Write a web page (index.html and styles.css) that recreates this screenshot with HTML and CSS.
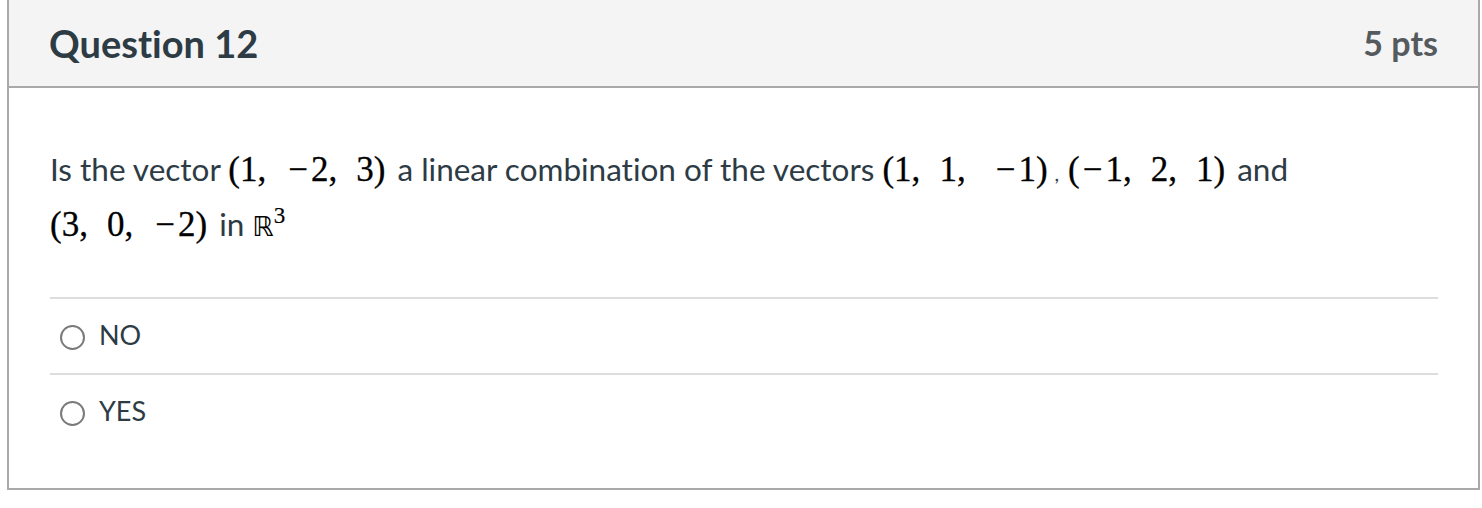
FILE: index.html
```html
<!DOCTYPE html>
<html lang="en">
<head>
<meta charset="utf-8">
<title>Question 12</title>
<link rel="stylesheet" href="styles.css">
</head>
<body>
<div class="question">
  <div class="question-header">
    <h2 class="question-title">Question 12</h2>
    <span class="question-points">5 pts</span>
  </div>
  <div class="question-body">
    <p class="question-text">Is the vector <span class="math">(1,<span class="sp"></span><span class="minus">−</span>2,<span class="sp"></span>3)</span> a linear combination of the vectors <span class="math">(1,<span class="sp"></span>1,<span class="sp sp-wide"></span><span class="minus">−</span>1)</span><span class="sep">,</span><span class="math">(<span class="minus">−</span>1,<span class="sp"></span>2,<span class="sp"></span>1)</span> and <span class="math">(3,<span class="sp"></span>0,<span class="sp"></span><span class="minus">−</span>2)</span> in <span class="math"><span class="bb">ℝ</span><sup class="sup">3</sup></span></p>
    <div class="answers">
      <label class="answer"><span class="radio"></span><span class="answer-text">NO</span></label>
      <label class="answer"><span class="radio"></span><span class="answer-text">YES</span></label>
    </div>
  </div>
</div>
</body>
</html>
```
FILE: styles.css
```css
html, body {
  margin: 0;
  padding: 0;
  background: #ffffff;
}

body {
  font-family: Lato, "Liberation Sans", sans-serif;
  font-variant-ligatures: none;
  color: #2d3b45;
}

.question {
  box-sizing: border-box;
  width: 1473px;
  margin: -2px 0 0 7px;
  border: 2px solid #a9a9a9;
  background: #ffffff;
}

.question-header {
  height: 86px;
  background: #f4f4f4;
  border-bottom: 2px solid #a9a9a9;
  display: flex;
  align-items: center;
  justify-content: space-between;
  padding: 0 40px 0 40px;
}

.question-title {
  margin: 0;
  font-size: 38px;
  font-weight: 700;
  color: #2d3b45;
  line-height: 1;
}

.question-points {
  font-size: 34px;
  font-weight: 700;
  color: #555a5e;
  line-height: 1;
}

.question-body {
  padding: 56px 40px 39px 41px;
}

.question-text {
  margin: 0 0 47px 0;
  font-size: 31.5px;
  line-height: 51px;
  max-width: 1320px;
}

.math {
  font-family: "Liberation Serif", "DejaVu Serif", serif;
  font-size: 35px;
  line-height: 1;
  color: #000000;
  white-space: nowrap;
  margin-right: 4px;
  -webkit-text-stroke: 0.3px #000000;
}

.minus {
  padding: 0 3px;
}

.sp {
  display: inline-block;
  width: 19px;
}

.sp-wide {
  width: 27px;
}

.sep {
  font-family: Lato, "Liberation Sans", sans-serif;
  font-size: 20px;
  margin: 0 9px 0 3px;
  color: #2d3b45;
  -webkit-text-stroke: 0;
}

.bb {
  font-family: "DejaVu Sans", sans-serif;
  font-size: 27px;
  -webkit-text-stroke: 0;
}

.sup {
  font-size: 23px;
  vertical-align: 13px;
  line-height: 0;
  -webkit-text-stroke: 0.2px #000000;
}

.answers {
  display: flex;
  flex-direction: column;
}

.answer {
  display: flex;
  align-items: center;
  height: 74px;
  border-top: 2px solid #dddddd;
  padding-left: 10px;
}

.radio {
  box-sizing: border-box;
  width: 25px;
  height: 25px;
  border: 2px solid #7a7a7a;
  border-radius: 50%;
  margin-right: 14px;
  margin-top: 2px;
}

.answer-text {
  font-size: 27px;
  color: #2d3b45;
  margin-top: -3px;
}
```
